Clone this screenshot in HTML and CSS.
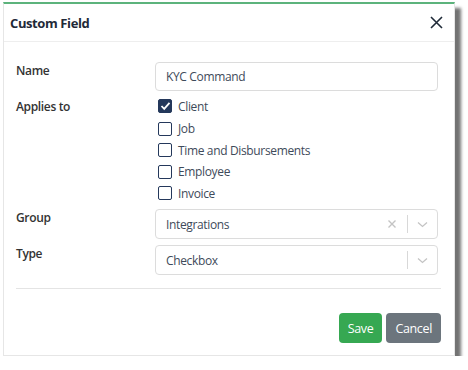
FILE: index.html
```html
<!DOCTYPE html>
<html lang="en">
<head>
    <meta charset="UTF-8">
    <title>Custom Field</title>
    <link rel="stylesheet" href="styles.css">
</head>
<body>
    <div class="modal">
        <div class="modal-header">
            <h3>Custom Field</h3>
            <span class="close-btn">
                <svg width="13" height="13" viewBox="0 0 13 13"><path d="M1 1L12 12M12 1L1 12" stroke="#1f2a38" stroke-width="1.6" fill="none"/></svg>
            </span>
        </div>

        <div class="modal-body">
            <div class="form-row">
                <label class="form-label">Name</label>
                <div class="form-control">
                    <div class="text-input">KYC Command</div>
                </div>
            </div>

            <div class="form-row">
                <label class="form-label label-check">Applies to</label>
                <div class="check-list">
                    <div class="check-item first"><span class="check-box checked"><svg width="11" height="10" viewBox="0 0 11 10"><path d="M1.5 5L4.2 7.8L9.5 1.8" stroke="#fff" stroke-width="1.8" fill="none"/></svg></span>Client</div>
                    <div class="check-item"><span class="check-box"></span>Job</div>
                    <div class="check-item"><span class="check-box"></span>Time and Disbursements</div>
                    <div class="check-item"><span class="check-box"></span>Employee</div>
                    <div class="check-item"><span class="check-box"></span>Invoice</div>
                </div>
            </div>

            <div class="form-row">
                <label class="form-label">Group</label>
                <div class="select-box">
                    <span class="select-value">Integrations</span>
                    <span class="select-clear">
                        <svg width="10" height="10" viewBox="0 0 10 10"><path d="M1.5 1.5L8.5 8.5M8.5 1.5L1.5 8.5" stroke="#c4c4c4" stroke-width="1.4" fill="none"/></svg>
                    </span>
                    <span class="select-sep"></span>
                    <span class="select-arrow">
                        <svg width="11" height="7" viewBox="0 0 11 7"><path d="M1 1.5L5.5 5.5L10 1.5" stroke="#c4c4c4" stroke-width="1.3" fill="none"/></svg>
                    </span>
                </div>
            </div>

            <div class="form-row">
                <label class="form-label">Type</label>
                <div class="select-box">
                    <span class="select-value">Checkbox</span>
                    <span class="select-sep"></span>
                    <span class="select-arrow">
                        <svg width="11" height="7" viewBox="0 0 11 7"><path d="M1 1.5L5.5 5.5L10 1.5" stroke="#c4c4c4" stroke-width="1.3" fill="none"/></svg>
                    </span>
                </div>
            </div>

            <hr class="divider">

            <div class="modal-footer">
                <button class="btn btn-save">Save</button>
                <button class="btn btn-cancel">Cancel</button>
            </div>
        </div>
    </div>
</body>
</html>
```

FILE: styles.css
```css
:root {
    --primary: #28a745;
    --accent: #5cb37c;
    --dark: #1f2a38;
    --text: #3e4a5a;
    --border: #dcdcdc;
    --navy: #24385b;
}

body {
    font-family: 'Open Sans', sans-serif;
    letter-spacing: -0.35px;
    margin: 0;
    padding: 0;
    background-color: white;
}

.modal {
    margin: 2px 0 0 3px;
    width: 450px;
    height: 351px;
    background: white;
    border: 1px solid #e6e6e6;
    border-top: 2px solid var(--accent);
    box-shadow: 6px 6px 3px rgba(0,0,0,0.55);
    display: flex;
    flex-direction: column;
}

.modal-header {
    height: 37px;
    display: flex;
    justify-content: space-between;
    align-items: center;
    padding: 0 11px 0 6px;
    border-bottom: 1px solid #eeeeee;
}

.modal-header h3 {
    margin: 0;
    font-size: 13px;
    font-weight: 700;
    color: var(--dark);
    letter-spacing: -0.4px;
}

.close-btn {
    display: flex;
    align-items: center;
}

.modal-body {
    padding: 20px 16px 0 12px;
}

.form-row {
    display: flex;
    margin-bottom: 6px;
}

.form-label {
    width: 139px;
    font-size: 12px;
    font-weight: 600;
    color: #333;
    line-height: 18px;
}

.form-label.label-check {
    padding-top: 1px;
}

.form-control {
    flex: 1;
}

.text-input {
    height: 27px;
    border: 1px solid var(--border);
    border-radius: 4px;
    padding: 0 10px;
    display: flex;
    align-items: center;
    font-size: 12px;
    color: var(--text);
}

.check-list {
    display: flex;
    flex-direction: column;
    gap: 1.5px;
    margin-top: -1px;
}

.check-item {
    display: flex;
    align-items: center;
    height: 20px;
    font-size: 12px;
    color: var(--text);
    padding-left: 3px;
}

.check-item.first {
    margin-bottom: 1px;
}

.check-box {
    width: 12px;
    height: 12px;
    border: 1.5px solid var(--navy);
    border-radius: 2px;
    margin-right: 6px;
    display: flex;
    justify-content: center;
    align-items: center;
}

.check-box.checked {
    background-color: var(--navy);
}

.select-box {
    flex: 1;
    height: 28px;
    border: 1px solid var(--border);
    border-radius: 4px;
    display: flex;
    align-items: center;
    padding-left: 10px;
    font-size: 12px;
    color: var(--text);
}

.select-value {
    flex: 1;
}

.select-clear {
    display: flex;
    margin-right: 10px;
}

.select-sep {
    width: 1px;
    height: 18px;
    background-color: #d8d8d8;
}

.select-arrow {
    display: flex;
    padding: 0 9px 0 9px;
}

.divider {
    border: none;
    border-top: 1px solid #e4e4e4;
    margin: 13px -3px 0 0;
}

.modal-footer {
    display: flex;
    justify-content: flex-end;
    gap: 4px;
    padding-top: 24px;
    margin-right: -3px;
}

.btn {
    font-family: 'Open Sans', sans-serif;
    letter-spacing: -0.35px;
    font-size: 12.5px;
    color: white;
    border: none;
    border-radius: 4px;
    height: 30px;
    padding: 0 9px;
}

.btn-save {
    background-color: #36a852;
}

.btn-cancel {
    background-color: #6c757d;
}
```
